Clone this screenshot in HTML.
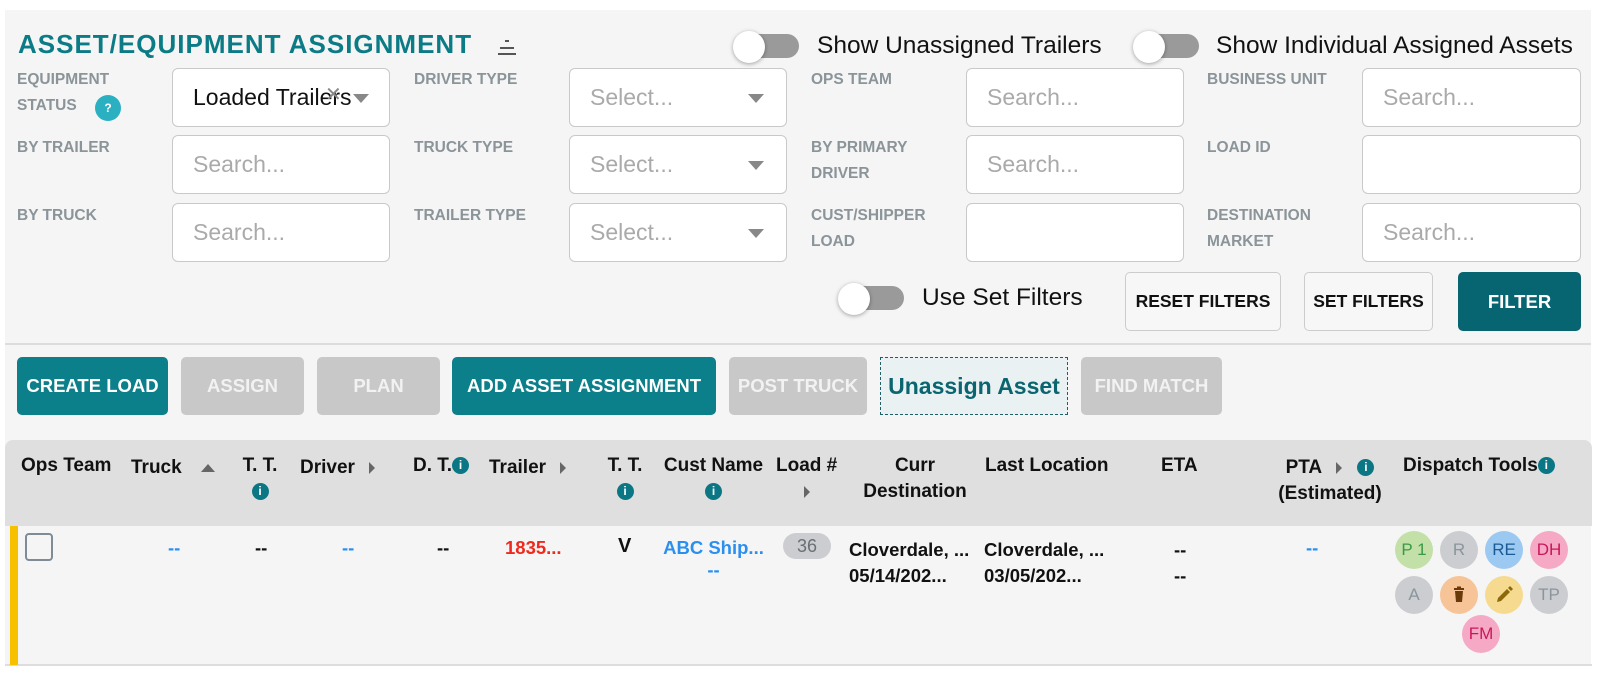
<!DOCTYPE html>
<html><head><meta charset="utf-8"><style>
*{box-sizing:border-box;margin:0;padding:0}
body{width:1600px;height:677px;background:#fff;font-family:"Liberation Sans",sans-serif;position:relative;overflow:hidden}
.a{position:absolute}
.panel{left:5px;top:10px;width:1586px;height:656px;background:#f5f5f5}
.title{left:18px;top:29px;font-size:26px;font-weight:bold;color:#0b7b85;letter-spacing:1px}
.tog{width:66px;height:30px}
.tog .tr{position:absolute;left:14px;top:3px;width:52px;height:24px;border-radius:12px;background:#9a9a9a}
.tog .kn{position:absolute;left:0;top:0;width:32px;height:32px;border-radius:50%;background:#fff;box-shadow:0 1px 4px rgba(0,0,0,.35)}
.tl{font-size:24.5px;color:#111}
.lbl{font-size:15.5px;font-weight:bold;color:#8a9499;line-height:26px}
.in{background:#fff;border:1px solid #c9c9c9;border-radius:6px;height:59px;font-size:23px;color:#aaa;padding:0 0 0 20px;line-height:57px}
.dd{position:absolute;right:22px;top:25px;width:0;height:0;border-left:8px solid transparent;border-right:8px solid transparent;border-top:9px solid #888}
.btn{border-radius:5px;font-size:18.5px;font-weight:bold;text-align:center;display:flex;align-items:center;justify-content:center;white-space:nowrap}
.wb{background:#f7f7f7;border:1px solid #ccc;color:#111}
.tb{background:#0b7f8a;color:#fff}
.gb{background:#c8c8c8;color:#f2f2f2}
.hd{font-size:19px;font-weight:bold;color:#111;line-height:26px}
.inf{display:inline-block;width:17px;height:17px;border-radius:50%;background:#0b7785;color:#fff;font-size:12px;text-align:center;line-height:17px;vertical-align:middle;font-weight:bold}
.ar{display:inline-block;width:0;height:0;border-top:6px solid transparent;border-bottom:6px solid transparent;border-left:6px solid #666;vertical-align:middle;margin-left:14px}
.dt{font-size:18.5px;font-weight:bold;color:#111}
.bl{color:#2b8ff0}
.c{width:38px;height:38px;border-radius:50%;font-size:17px;text-align:center;line-height:38px}
</style></head><body>
<div class="a panel"></div>
<div class="a title">ASSET/EQUIPMENT ASSIGNMENT</div>
<div class="a" style="left:498px;top:38px;width:18px;height:20px">
<div class="a" style="left:7px;top:2px;width:4px;height:2px;background:#555"></div>
<div class="a" style="left:2px;top:9px;width:14px;height:2px;background:#555"></div>
<div class="a" style="left:0;top:15px;width:18px;height:2px;background:#555"></div></div>

<div class="a tog" style="left:733px;top:31px"><div class="tr"></div><div class="kn"></div></div>
<div class="a tl" style="left:817px;top:32px">Show Unassigned Trailers</div>
<div class="a tog" style="left:1133px;top:31px"><div class="tr"></div><div class="kn"></div></div>
<div class="a tl" style="left:1216px;top:32px">Show Individual Assigned Assets</div>

<div class="a lbl" style="left:17px;top:67px">EQUIPMENT<br>STATUS <span class="a" style="left:78px;top:28px;width:26px;height:26px;border-radius:50%;background:#2bb0c2;color:#fff;font-size:12px;text-align:center;line-height:26px">?</span></div>
<div class="a in" style="left:172px;top:68px;width:218px;color:#111">Loaded Trailers<span class="a" style="left:152px;top:-2px;color:#888;font-size:20px">✕</span><span class="dd" style="right:20px"></span></div>
<div class="a lbl" style="left:414px;top:67px">DRIVER TYPE</div>
<div class="a in" style="left:569px;top:68px;width:218px">Select...<span class="dd"></span></div>
<div class="a lbl" style="left:811px;top:67px">OPS TEAM</div>
<div class="a in" style="left:966px;top:68px;width:218px">Search...</div>
<div class="a lbl" style="left:1207px;top:67px">BUSINESS UNIT</div>
<div class="a in" style="left:1362px;top:68px;width:219px">Search...</div>

<div class="a lbl" style="left:17px;top:135px">BY TRAILER</div>
<div class="a in" style="left:172px;top:135px;width:218px">Search...</div>
<div class="a lbl" style="left:414px;top:135px">TRUCK TYPE</div>
<div class="a in" style="left:569px;top:135px;width:218px">Select...<span class="dd"></span></div>
<div class="a lbl" style="left:811px;top:135px">BY PRIMARY<br>DRIVER</div>
<div class="a in" style="left:966px;top:135px;width:218px">Search...</div>
<div class="a lbl" style="left:1207px;top:135px">LOAD ID</div>
<div class="a in" style="left:1362px;top:135px;width:219px"></div>

<div class="a lbl" style="left:17px;top:203px">BY TRUCK</div>
<div class="a in" style="left:172px;top:203px;width:218px">Search...</div>
<div class="a lbl" style="left:414px;top:203px">TRAILER TYPE</div>
<div class="a in" style="left:569px;top:203px;width:218px">Select...<span class="dd"></span></div>
<div class="a lbl" style="left:811px;top:203px">CUST/SHIPPER<br>LOAD</div>
<div class="a in" style="left:966px;top:203px;width:218px"></div>
<div class="a lbl" style="left:1207px;top:203px">DESTINATION<br>MARKET</div>
<div class="a in" style="left:1362px;top:203px;width:219px">Search...</div>

<div class="a tog" style="left:838px;top:283px"><div class="tr"></div><div class="kn"></div></div>
<div class="a tl" style="left:922px;top:284px">Use Set Filters</div>
<div class="a btn wb" style="left:1125px;top:272px;width:156px;height:59px;font-size:17.5px">RESET FILTERS</div>
<div class="a btn wb" style="left:1304px;top:272px;width:129px;height:59px;font-size:17.5px">SET FILTERS</div>
<div class="a btn" style="left:1458px;top:272px;width:123px;height:59px;background:#066570;color:#fff">FILTER</div>

<div class="a" style="left:5px;top:343px;width:1586px;height:2px;background:#ddd"></div>

<div class="a btn tb" style="left:17px;top:357px;width:151px;height:58px">CREATE LOAD</div>
<div class="a btn gb" style="left:181px;top:357px;width:123px;height:58px">ASSIGN</div>
<div class="a btn gb" style="left:317px;top:357px;width:123px;height:58px">PLAN</div>
<div class="a btn tb" style="left:452px;top:357px;width:264px;height:58px">ADD ASSET ASSIGNMENT</div>
<div class="a btn gb" style="left:729px;top:357px;width:138px;height:58px">POST TRUCK</div>
<div class="a btn" style="left:880px;top:357px;width:188px;height:58px;border:1.5px dashed #1f5f66;border-radius:0;background:#eaf1f2;color:#0b6570;font-size:23px">Unassign Asset</div>
<div class="a btn gb" style="left:1081px;top:357px;width:141px;height:58px">FIND MATCH</div>

<div class="a" style="left:5px;top:440px;width:1587px;height:86px;background:#e0dfe0;border-radius:8px 8px 0 0"></div>
<div class="a" style="left:5px;top:526px;width:1587px;height:140px;border-bottom:2px solid #ddd"></div>
<div class="a" style="left:10px;top:526px;width:8px;height:139px;background:#f7c100"></div>

<div class="a hd" style="left:21px;top:453px">Ops Team</div>
<div class="a hd" style="left:131px;top:455px">Truck <span style="display:inline-block;border-left:7px solid transparent;border-right:7px solid transparent;border-bottom:8px solid #666;margin-left:14px;vertical-align:middle"></span></div>
<div class="a hd" style="left:240px;top:453px;width:40px;text-align:center">T. T.<br><span class="inf">i</span></div>
<div class="a hd" style="left:300px;top:455px">Driver<span class="ar"></span></div>
<div class="a hd" style="left:413px;top:453px">D. T.<span class="inf">i</span></div>
<div class="a hd" style="left:489px;top:455px">Trailer<span class="ar"></span></div>
<div class="a hd" style="left:605px;top:453px;width:40px;text-align:center">T. T.<br><span class="inf">i</span></div>
<div class="a hd" style="left:656px;top:453px;width:115px;text-align:center">Cust Name<br><span class="inf">i</span></div>
<div class="a hd" style="left:776px;top:453px">Load #<br><span class="ar" style="margin-left:28px"></span></div>
<div class="a hd" style="left:850px;top:453px;width:130px;text-align:center">Curr<br>Destination</div>
<div class="a hd" style="left:985px;top:453px">Last Location</div>
<div class="a hd" style="left:1161px;top:453px">ETA</div>
<div class="a hd" style="left:1255px;top:455px;width:150px;text-align:center">PTA<span class="ar"></span> <span class="inf" style="margin-left:10px">i</span><br>(Estimated)</div>
<div class="a hd" style="left:1403px;top:453px">Dispatch Tools<span class="inf">i</span></div>

<div class="a" style="left:25px;top:533px;width:28px;height:28px;border:2.5px solid #7f8c95;border-radius:4px;background:#f5f5f5"></div>
<div class="a dt bl" style="left:168px;top:537px">--</div>
<div class="a dt" style="left:255px;top:537px">--</div>
<div class="a dt bl" style="left:342px;top:537px">--</div>
<div class="a dt" style="left:437px;top:537px">--</div>
<div class="a dt" style="left:505px;top:537px;color:#f0291c">1835...</div>
<div class="a dt" style="left:618px;top:535px;font-size:20px">V</div>
<div class="a dt bl" style="left:656px;top:537px;width:115px;text-align:center">ABC Ship...<br>--</div>
<div class="a" style="left:783px;top:533px;width:48px;height:26px;border-radius:13px;background:#cbcdd0;color:#6a6f73;font-size:18px;text-align:center;line-height:26px">36</div>
<div class="a dt" style="left:849px;top:537px;line-height:26px">Cloverdale, ...<br>05/14/202...</div>
<div class="a dt" style="left:984px;top:537px;line-height:26px">Cloverdale, ...<br>03/05/202...</div>
<div class="a dt" style="left:1174px;top:537px;line-height:26px">--<br>--</div>
<div class="a dt bl" style="left:1306px;top:537px">--</div>

<div class="a c" style="left:1395px;top:531px;background:#c3e0a8;color:#3a9a48">P 1</div>
<div class="a c" style="left:1440px;top:531px;background:#cbcdd0;color:#8a959c">R</div>
<div class="a c" style="left:1485px;top:531px;background:#9cc9f2;color:#1a5a94">RE</div>
<div class="a c" style="left:1530px;top:531px;background:#f5a9c4;color:#c8185a">DH</div>
<div class="a c" style="left:1395px;top:576px;background:#cbcdd0;color:#8a959c">A</div>
<div class="a c" style="left:1440px;top:576px;background:#f6c496"><svg width="38" height="38" viewBox="0 0 38 38"><rect x="14" y="12" width="10" height="2" fill="#6a3a0a"/><rect x="17" y="10.5" width="4" height="2" fill="#6a3a0a"/><path d="M15 15h8l-1 11h-6z" fill="#6a3a0a"/></svg></div>
<div class="a c" style="left:1485px;top:576px;background:#f6da90"><svg width="38" height="38" viewBox="0 0 38 38"><path d="M12 26l1-4 9-9 3 3-9 9z" fill="#8a6a0a"/><path d="M23 12l2-2 3 3-2 2z" fill="#8a6a0a"/></svg></div>
<div class="a c" style="left:1530px;top:576px;background:#cbcdd0;color:#8a959c">TP</div>
<div class="a c" style="left:1462px;top:615px;background:#f5a9c4;color:#c8185a">FM</div>
</body></html>
